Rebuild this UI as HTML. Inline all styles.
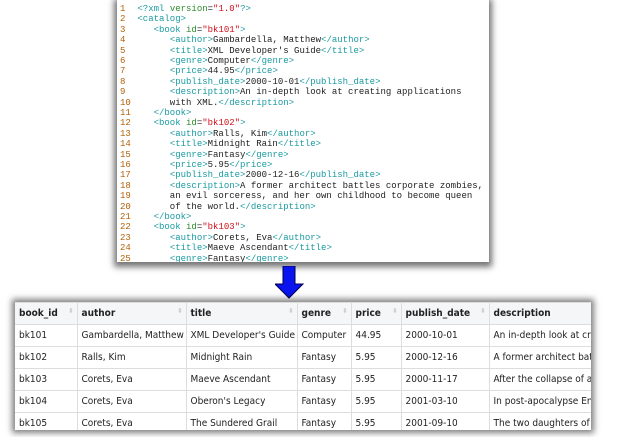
<!DOCTYPE html>
<html><head><style>
body{margin:0;width:619px;height:437px;background:#fff;position:relative;overflow:hidden}
#code{position:absolute;left:117px;top:0;width:372px;height:262px;background:#fff;box-shadow:0 2px 6px 3px rgba(0,0,0,.55);overflow:hidden;font-family:"Liberation Mono",monospace;font-size:9px;}
.l{position:absolute;left:0;height:10.4px;line-height:10.4px;white-space:pre;color:#222}
.n{display:inline-block;width:12px;text-align:left;padding-left:3px;color:#b45f06}
.t{color:#1a9aa0}.a{color:#2e8b2e}.s{color:#d0101a}
#arrow{position:absolute;left:275px;top:266px}
#tbl{position:absolute;left:15px;top:302px;width:576px;height:128px;background:#fff;box-shadow:0 0 6px 3px rgba(0,0,0,.5);overflow:hidden}
table{border-collapse:collapse;font-family:"DejaVu Sans Condensed","Liberation Sans",sans-serif;font-size:10px;color:#222;table-layout:fixed;width:600px}
td,th{border:1px solid #ddd;height:21px;padding:0 4px;white-space:nowrap;overflow:hidden;text-align:left}
th{background:#f5f6f8;font-weight:bold;position:relative}
th:after{content:"⬍";position:absolute;right:3px;top:4px;font-size:7px;color:#ccc}
tr td:first-child,tr th:first-child{border-left:none}
</style></head><body>
<div id="code">
<div class="l" style="top:4px"><span class="n">1</span> <span class="t">&lt;?xml</span> <span class="a">version</span>=<span class="s">"1.0"</span><span class="t">?&gt;</span></div>
<div class="l" style="top:14.4px"><span class="n">2</span> <span class="t">&lt;catalog&gt;</span></div>
<div class="l" style="top:24.8px"><span class="n">3</span>    <span class="t">&lt;book</span> <span class="a">id</span>=<span class="s">"bk101"</span><span class="t">&gt;</span></div>
<div class="l" style="top:35.2px"><span class="n">4</span>       <span class="t">&lt;author&gt;</span>Gambardella, Matthew<span class="t">&lt;/author&gt;</span></div>
<div class="l" style="top:45.6px"><span class="n">5</span>       <span class="t">&lt;title&gt;</span>XML Developer's Guide<span class="t">&lt;/title&gt;</span></div>
<div class="l" style="top:56px"><span class="n">6</span>       <span class="t">&lt;genre&gt;</span>Computer<span class="t">&lt;/genre&gt;</span></div>
<div class="l" style="top:66.4px"><span class="n">7</span>       <span class="t">&lt;price&gt;</span>44.95<span class="t">&lt;/price&gt;</span></div>
<div class="l" style="top:76.8px"><span class="n">8</span>       <span class="t">&lt;publish_date&gt;</span>2000-10-01<span class="t">&lt;/publish_date&gt;</span></div>
<div class="l" style="top:87.2px"><span class="n">9</span>       <span class="t">&lt;description&gt;</span>An in-depth look at creating applications</div>
<div class="l" style="top:97.6px"><span class="n">10</span>       with XML.<span class="t">&lt;/description&gt;</span></div>
<div class="l" style="top:108px"><span class="n">11</span>    <span class="t">&lt;/book&gt;</span></div>
<div class="l" style="top:118.4px"><span class="n">12</span>    <span class="t">&lt;book</span> <span class="a">id</span>=<span class="s">"bk102"</span><span class="t">&gt;</span></div>
<div class="l" style="top:128.8px"><span class="n">13</span>       <span class="t">&lt;author&gt;</span>Ralls, Kim<span class="t">&lt;/author&gt;</span></div>
<div class="l" style="top:139.2px"><span class="n">14</span>       <span class="t">&lt;title&gt;</span>Midnight Rain<span class="t">&lt;/title&gt;</span></div>
<div class="l" style="top:149.6px"><span class="n">15</span>       <span class="t">&lt;genre&gt;</span>Fantasy<span class="t">&lt;/genre&gt;</span></div>
<div class="l" style="top:160px"><span class="n">16</span>       <span class="t">&lt;price&gt;</span>5.95<span class="t">&lt;/price&gt;</span></div>
<div class="l" style="top:170.4px"><span class="n">17</span>       <span class="t">&lt;publish_date&gt;</span>2000-12-16<span class="t">&lt;/publish_date&gt;</span></div>
<div class="l" style="top:180.8px"><span class="n">18</span>       <span class="t">&lt;description&gt;</span>A former architect battles corporate zombies,</div>
<div class="l" style="top:191.2px"><span class="n">19</span>       an evil sorceress, and her own childhood to become queen</div>
<div class="l" style="top:201.6px"><span class="n">20</span>       of the world.<span class="t">&lt;/description&gt;</span></div>
<div class="l" style="top:212px"><span class="n">21</span>    <span class="t">&lt;/book&gt;</span></div>
<div class="l" style="top:222.4px"><span class="n">22</span>    <span class="t">&lt;book</span> <span class="a">id</span>=<span class="s">"bk103"</span><span class="t">&gt;</span></div>
<div class="l" style="top:232.8px"><span class="n">23</span>       <span class="t">&lt;author&gt;</span>Corets, Eva<span class="t">&lt;/author&gt;</span></div>
<div class="l" style="top:243.2px"><span class="n">24</span>       <span class="t">&lt;title&gt;</span>Maeve Ascendant<span class="t">&lt;/title&gt;</span></div>
<div class="l" style="top:253.6px"><span class="n">25</span>       <span class="t">&lt;genre&gt;</span>Fantasy<span class="t">&lt;/genre&gt;</span></div>
</div>
<svg id="arrow" width="30" height="34" viewBox="0 0 30 34"><path d="M8 0H20V18H28L14 32L0 18H8Z" fill="#0a14ee" stroke="#000050" stroke-width="1"/></svg>
<div id="tbl"><table>
<colgroup><col style="width:62px"><col style="width:109px"><col style="width:111px"><col style="width:54px"><col style="width:50px"><col style="width:88px"><col style="width:126px"></colgroup>
<tr><th>book_id</th><th>author</th><th>title</th><th>genre</th><th>price</th><th>publish_date</th><th>description</th></tr>
<tr><td>bk101</td><td>Gambardella, Matthew</td><td>XML Developer's Guide</td><td>Computer</td><td>44.95</td><td>2000-10-01</td><td>An in-depth look at creating</td></tr>
<tr><td>bk102</td><td>Ralls, Kim</td><td>Midnight Rain</td><td>Fantasy</td><td>5.95</td><td>2000-12-16</td><td>A former architect battles</td></tr>
<tr><td>bk103</td><td>Corets, Eva</td><td>Maeve Ascendant</td><td>Fantasy</td><td>5.95</td><td>2000-11-17</td><td>After the collapse of a</td></tr>
<tr><td>bk104</td><td>Corets, Eva</td><td>Oberon's Legacy</td><td>Fantasy</td><td>5.95</td><td>2001-03-10</td><td>In post-apocalypse England</td></tr>
<tr><td>bk105</td><td>Corets, Eva</td><td>The Sundered Grail</td><td>Fantasy</td><td>5.95</td><td>2001-09-10</td><td>The two daughters of</td></tr>
</table></div>
</body></html>
